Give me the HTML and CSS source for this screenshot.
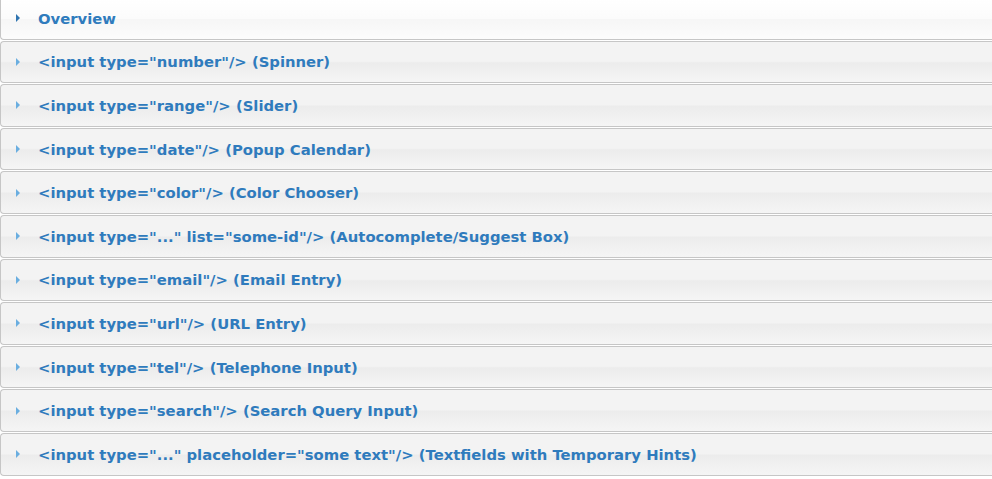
FILE: index.html
```html
<!DOCTYPE html>
<html>
<head>
<meta charset="utf-8">
<link rel="stylesheet" href="styles.css">
</head>
<body>
<div class="accordion">
  <div class="row active"><span class="tri"></span><span class="label">Overview</span></div>
  <div class="row"><span class="tri"></span><span class="label">&lt;input type="number"/&gt; (Spinner)</span></div>
  <div class="row"><span class="tri"></span><span class="label">&lt;input type="range"/&gt; (Slider)</span></div>
  <div class="row"><span class="tri"></span><span class="label">&lt;input type="date"/&gt; (Popup Calendar)</span></div>
  <div class="row"><span class="tri"></span><span class="label">&lt;input type="color"/&gt; (Color Chooser)</span></div>
  <div class="row"><span class="tri"></span><span class="label">&lt;input type="..." list="some-id"/&gt; (Autocomplete/Suggest Box)</span></div>
  <div class="row"><span class="tri"></span><span class="label">&lt;input type="email"/&gt; (Email Entry)</span></div>
  <div class="row"><span class="tri"></span><span class="label">&lt;input type="url"/&gt; (URL Entry)</span></div>
  <div class="row"><span class="tri"></span><span class="label">&lt;input type="tel"/&gt; (Telephone Input)</span></div>
  <div class="row"><span class="tri"></span><span class="label">&lt;input type="search"/&gt; (Search Query Input)</span></div>
  <div class="row"><span class="tri"></span><span class="label">&lt;input type="..." placeholder="some text"/&gt; (Textfields with Temporary Hints)</span></div>
</div>
</body>
</html>
```
FILE: styles.css
```css
html, body {
  margin: 0;
  padding: 0;
  background: #ffffff;
  overflow: hidden;
}
.accordion {
  display: flex;
  flex-direction: column;
  gap: 1px;
  margin-top: -3px;
}
.row {
  display: flex;
  align-items: center;
  height: 40.6px;
  box-sizing: content-box;
  border: 1px solid #c6c6c6;
  border-right: none;
  border-radius: 4px 0 0 4px;
  background: linear-gradient(#f3f3f3 0%, #f3f3f3 48%, #ececec 52%, #f5f5f5 100%);
  font-family: "DejaVu Sans", Verdana, sans-serif;
  font-weight: bold;
  font-size: 14.8px;
  color: #2f7bbd;
}
.row.active {
  border-top-color: transparent;
  background: linear-gradient(#ffffff 0%, #fbfbfb 50%, #f6f6f6 52%, #fcfcfc 100%);
}
.tri {
  width: 0;
  height: 0;
  border-top: 4px solid transparent;
  border-bottom: 4px solid transparent;
  border-left: 4px solid #6aaee0;
  margin-left: 15px;
  margin-right: 20px;
}
.label {
  margin-left: -2px;
}
.row.active .tri {
  border-left-color: #2e74b0;
}
```
